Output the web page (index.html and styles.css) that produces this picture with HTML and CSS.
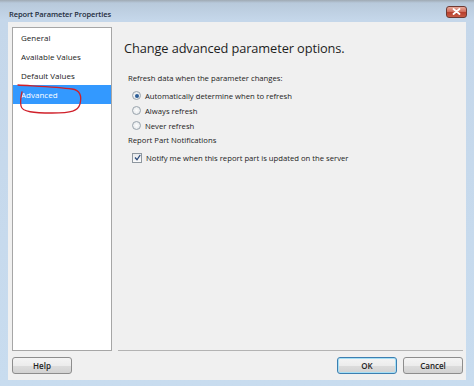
FILE: index.html
```html
<!DOCTYPE html>
<html lang="en">
<head>
    <meta charset="UTF-8">
    <title>Report Parameter Properties</title>
    <link rel="stylesheet" href="styles.css">
</head>
<body>
    <div class="window">
        <div class="titlebar">
            <span class="title">Report Parameter Properties</span>
            <div class="close-btn">
                <svg width="9" height="7" viewBox="0 0 9 7">
                    <path d="M1.5 1 L7.5 6 M7.5 1 L1.5 6" stroke="#fff" stroke-width="1.8" stroke-linecap="round"/>
                </svg>
            </div>
        </div>

        <div class="client">
            <div class="main">
                <div class="nav-list">
                    <div class="nav-item">General</div>
                    <div class="nav-item">Available Values</div>
                    <div class="nav-item">Default Values</div>
                    <div class="nav-item selected">Advanced</div>
                    <svg class="scribble" width="80" height="40" viewBox="0 0 80 40">
                        <path d="M6 3 C20 4 45 5 60 7 C68 8 70 14 68 22 C66 29 60 31 40 31 C22 31 10 30 9 24 C8 19 9 14 10 10"
                              fill="none" stroke="#d0202a" stroke-width="1.3" stroke-linecap="round"/>
                    </svg>
                </div>

                <div class="page">
                    <h1>Change advanced parameter options.</h1>
                    <div class="group-label">Refresh data when the parameter changes:</div>
                    <div class="option">
                        <span class="radio checked"></span>
                        <span>Automatically determine when to refresh</span>
                    </div>
                    <div class="option">
                        <span class="radio"></span>
                        <span>Always refresh</span>
                    </div>
                    <div class="option">
                        <span class="radio"></span>
                        <span>Never refresh</span>
                    </div>
                    <div class="group-label">Report Part Notifications</div>
                    <div class="option">
                        <span class="checkbox">
                            <svg width="7" height="7" viewBox="0 0 7 7">
                                <path d="M1 3.5 L3 5.8 L6.2 1" fill="none" stroke="#2b4a7a" stroke-width="1.3"/>
                            </svg>
                        </span>
                        <span>Notify me when this report part is updated on the server</span>
                    </div>
                </div>
            </div>

            <div class="footer">
                <button class="btn">Help</button>
                <div class="footer-right">
                    <button class="btn default">OK</button>
                    <button class="btn">Cancel</button>
                </div>
            </div>
        </div>
    </div>
</body>
</html>
```

FILE: styles.css
```css
body {
    margin: 0;
    font-family: "Open Sans", "Noto Sans", sans-serif;
    background: #c9dbee;
}

.window {
    width: 474px;
    height: 386px;
    display: flex;
    flex-direction: column;
    background: linear-gradient(to bottom, #9fa9b3 0px, #b8c9db 3px, #c5d7ea 20px, #c8dcef 100%);
    box-sizing: border-box;
    overflow: hidden;
}

.titlebar {
    height: 22px;
    display: flex;
    align-items: center;
    justify-content: space-between;
    padding: 5px 7px 0 9px;
    box-sizing: border-box;
    flex-shrink: 0;
}
.title {
    font-size: 7.5px;
    font-weight: 600;
    color: #1e2c3c;
    letter-spacing: -0.1px;
}
.close-btn {
    width: 19px;
    height: 10px;
    margin-top: -4px;
    border: 1px solid #6e3a33;
    border-radius: 3px;
    background: linear-gradient(to bottom, #e9a99b 0%, #d1705f 45%, #b7402e 55%, #c85b45 100%);
    display: flex;
    align-items: center;
    justify-content: center;
}

.client {
    flex: 1;
    margin: 0 8px 6px 8px;
    background: #f0f0f0;
    display: flex;
    flex-direction: column;
    padding: 5px 3px 0 4px;
}

.main {
    display: flex;
    flex: 1;
}

.nav-list {
    position: relative;
    width: 98px;
    background: #fff;
    border: 1px solid #a6a6a6;
    padding-top: 0;
}
.nav-item {
    height: 19px;
    line-height: 19px;
    padding-left: 8px;
    font-size: 8px;
    color: #222;
}
.nav-item.selected {
    background: #3399ff;
    color: #fff;
}
.scribble {
    position: absolute;
    left: -1px;
    top: 54px;
}

.page {
    flex: 1;
    margin-left: 6px;
    padding-left: 6px;
    border-bottom: 1px solid #b3b3b3;
}
.page h1 {
    margin: 12px 0 14px 0;
    font-size: 12.8px;
    font-weight: 400;
    color: #1e1e1e;
    letter-spacing: -0.1px;
}
.group-label {
    font-size: 7.7px;
    color: #222;
    height: 15px;
    line-height: 15px;
    padding-left: 4px;
    margin-bottom: 2px;
}
.option {
    display: flex;
    align-items: center;
    gap: 4px;
    height: 15px;
    padding-left: 8px;
    font-size: 7.7px;
    color: #222;
}
.radio {
    width: 7px;
    height: 7px;
    border: 1px solid #9aa4ad;
    border-radius: 50%;
    background: radial-gradient(circle, #fdfdfd 0%, #dfe3e6 100%);
    display: flex;
    align-items: center;
    justify-content: center;
}
.radio.checked::after {
    content: "";
    width: 4px;
    height: 4px;
    border-radius: 50%;
    background: #2c5d96;
}
.checkbox {
    width: 8px;
    height: 8px;
    border: 1px solid #8e979f;
    background: linear-gradient(to bottom, #e8eaec, #fafafa);
    display: flex;
    align-items: center;
    justify-content: center;
}

.footer {
    height: 29px;
    display: flex;
    align-items: center;
    justify-content: space-between;
}
.footer-right {
    display: flex;
    gap: 6px;
}
.btn {
    width: 60px;
    height: 17px;
    font-family: "Open Sans", "Noto Sans", sans-serif;
    font-size: 8px;
    font-weight: 600;
    color: #222;
    border: 1px solid #8d8d8d;
    border-radius: 3px;
    background: linear-gradient(to bottom, #f4f4f4 0%, #ececec 50%, #dcdcdc 52%, #d2d2d2 100%);
    padding: 0;
}
.btn.default {
    border-color: #3c7fb1;
    box-shadow: inset 0 0 0 1px #a6dff5;
}
```
